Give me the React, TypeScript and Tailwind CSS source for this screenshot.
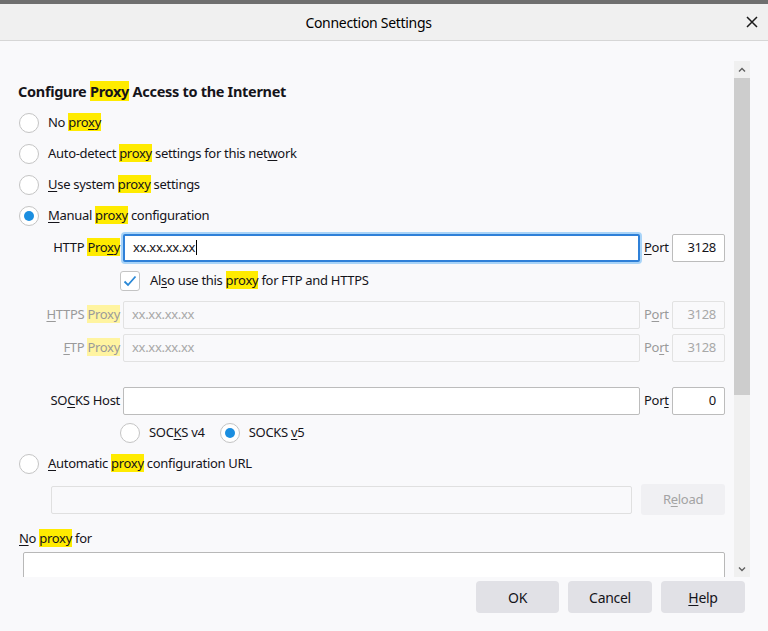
import type { ReactNode } from "react";

function Hl({ children, dim = false }: { children: ReactNode; dim?: boolean }) {
  return <span className={dim ? "bg-[#fff4a0]" : "bg-[#ffeb00]"}>{children}</span>;
}

function U({ children }: { children: ReactNode }) {
  return <span className="underline underline-offset-2">{children}</span>;
}

function Radio({ checked = false }: { checked?: boolean }) {
  return (
    <span className="flex h-[20px] w-[20px] flex-shrink-0 items-center justify-center rounded-full border border-[#c4c4c4] bg-white">
      {checked ? <span className="h-[10px] w-[10px] rounded-full bg-[#1b8ee0]" /> : null}
    </span>
  );
}

function RadioRow({ checked, children }: { checked?: boolean; children: ReactNode }) {
  return (
    <div className="flex h-[31px] items-center gap-[9px]">
      <Radio checked={checked} />
      <span>{children}</span>
    </div>
  );
}

interface ProxyRowProps {
  label: ReactNode;
  value: string;
  port: ReactNode;
  disabled?: boolean;
  focused?: boolean;
  portValue: string;
}

function ProxyRow({ label, value, port, disabled = false, focused = false, portValue }: ProxyRowProps) {
  const fieldBorder = disabled
    ? "border border-[#e2e2e2] bg-[#f9f9fb] text-[#a8a8a8]"
    : focused
      ? "border-2 border-[#2f80d8] bg-white shadow-[0_0_0_2px_#a9d4f8]"
      : "border border-[#bcbcbc] bg-white";
  return (
    <div className={`flex h-[33px] items-center ${disabled ? "text-[#9a9a9a]" : ""}`}>
      <div className="w-[102px] flex-shrink-0 pr-[1px] text-right">{label}</div>
      <div className={`ml-[2px] flex h-[28px] flex-1 items-center rounded-[2px] px-[8px] ${fieldBorder}`}>
        {value}
        {focused ? <span className="ml-[1px] inline-block h-[15px] w-[1px] bg-black" /> : null}
      </div>
      <div className="w-[32px] flex-shrink-0 pl-[4px]">{port}</div>
      <div
        className={`flex h-[28px] w-[53px] flex-shrink-0 items-center justify-end rounded-[2px] pr-[8px] ${
          disabled ? "border border-[#e2e2e2] text-[#a8a8a8]" : "border border-[#bcbcbc] bg-white"
        }`}
      >
        {portValue}
      </div>
    </div>
  );
}

function Scrollbar() {
  return (
    <div className="mt-[20px] flex w-[16px] flex-col">
      <div className="flex h-[17px] items-center justify-center bg-[#f0f0f0]">
        <svg width="8" height="6" viewBox="0 0 8 6" fill="none">
          <path d="M1 4.5 L4 1.5 L7 4.5" stroke="#606060" strokeWidth="1.4" />
        </svg>
      </div>
      <div className="h-[317px] bg-[#cdcdcd]" />
      <div className="flex-1 bg-[#f0f0f0]" />
      <div className="flex h-[17px] items-center justify-center bg-[#f0f0f0]">
        <svg width="8" height="6" viewBox="0 0 8 6" fill="none">
          <path d="M1 1.5 L4 4.5 L7 1.5" stroke="#606060" strokeWidth="1.4" />
        </svg>
      </div>
    </div>
  );
}

export default function App() {
  return (
    <div className="flex h-[631px] w-[768px] flex-col overflow-hidden bg-[#f9f9fb] font-['Noto_Sans',_sans-serif] text-[13px] tracking-[-0.3px] text-[#15141a]">
      <div className="h-[4px] bg-[#6f6f6f]" />
      <div className="relative flex h-[37px] items-center justify-center border-b border-[#d6d6d6] bg-[#f0f0f0] pr-[31px] text-[14px] text-black">
        Connection Settings
        <svg className="absolute right-[10px] top-[12px]" width="12" height="12" viewBox="0 0 12 12">
          <path d="M1 1 L11 11 M11 1 L1 11" stroke="#1a1a1a" strokeWidth="1.5" />
        </svg>
      </div>

      <div className="flex h-[536px] overflow-hidden">
        <div className="w-[734px] flex-shrink-0 pl-[19px] pr-[9px] pt-[36px]">
          <div className="-ml-[1px] flex h-[30px] items-center text-[14.5px] font-bold">
            <span>
              Configure <Hl>Proxy</Hl> Access to the Internet
            </span>
          </div>
          <RadioRow>
            No <Hl>pro<U>x</U>y</Hl>
          </RadioRow>
          <RadioRow>
            Auto-detect <Hl>proxy</Hl> settings for this net<U>w</U>ork
          </RadioRow>
          <RadioRow>
            <U>U</U>se system <Hl>proxy</Hl> settings
          </RadioRow>
          <RadioRow checked>
            <U>M</U>anual <Hl>proxy</Hl> configuration
          </RadioRow>

          <ProxyRow
            focused
            label={
              <>
                HTTP <Hl>Pro<U>x</U>y</Hl>
              </>
            }
            value="xx.xx.xx.xx"
            port={
              <>
                <U>P</U>ort
              </>
            }
            portValue="3128"
          />

          <div className="flex h-[34px] items-center pl-[101px]">
            <span className="flex h-[20px] w-[20px] items-center justify-center rounded-[3px] border border-[#c4c4c4] bg-white">
              <svg width="14" height="12" viewBox="0 0 14 12" fill="none">
                <path d="M1.5 6.5 L5 10 L12.5 1.5" stroke="#2a88d6" strokeWidth="1.8" />
              </svg>
            </span>
            <span className="ml-[10px]">
              Al<U>s</U>o use this <Hl>proxy</Hl> for FTP and HTTPS
            </span>
          </div>

          <ProxyRow
            disabled
            label={
              <>
                <U>H</U>TTPS <Hl dim>Proxy</Hl>
              </>
            }
            value="xx.xx.xx.xx"
            port={
              <>
                P<U>o</U>rt
              </>
            }
            portValue="3128"
          />
          <ProxyRow
            disabled
            label={
              <>
                <U>F</U>TP <Hl dim>Proxy</Hl>
              </>
            }
            value="xx.xx.xx.xx"
            port={
              <>
                Po<U>r</U>t
              </>
            }
            portValue="3128"
          />

          <div className="h-[20px]" />
          <ProxyRow
            label={
              <>
                SO<U>C</U>KS Host
              </>
            }
            value=""
            port={
              <>
                Por<U>t</U>
              </>
            }
            portValue="0"
          />

          <div className="flex h-[32px] items-center pl-[101px]">
            <Radio />
            <span className="ml-[9px]">
              SOC<U>K</U>S v4
            </span>
            <span className="ml-[15px]">
              <Radio checked />
            </span>
            <span className="ml-[9px]">
              SOCKS <U>v</U>5
            </span>
          </div>

          <div className="flex h-[30px] items-center gap-[9px]">
            <Radio />
            <span>
              <U>A</U>utomatic <Hl>proxy</Hl> configuration URL
            </span>
          </div>

          <div className="flex h-[41px] items-center pl-[32px]">
            <div className="h-[28px] flex-1 rounded-[2px] border border-[#e0e0e0]" />
            <div className="ml-[9px] flex h-[31px] w-[84px] items-center justify-center rounded-[3px] bg-[#f0f0f3] text-[#a3a3a3]">
              <span>
                R<U>e</U>load
              </span>
            </div>
          </div>

          <div className="flex h-[32px] items-center pt-[6px]">
            <span>
              <U>N</U>o <Hl>proxy</Hl> for
            </span>
          </div>
          <div className="ml-[4px] h-[60px] rounded-[2px] border border-[#b8b8b8] bg-white" />
        </div>
        <Scrollbar />
      </div>

      <div className="flex justify-end gap-[9px] pr-[23px] pt-[4px]">
        <div className="flex h-[32px] w-[83px] items-center justify-center rounded-[4px] bg-[#e1e1e6] text-[14px]">OK</div>
        <div className="flex h-[32px] w-[84px] items-center justify-center rounded-[4px] bg-[#e1e1e6] text-[14px]">Cancel</div>
        <div className="flex h-[32px] w-[84px] items-center justify-center rounded-[4px] bg-[#e1e1e6] text-[14px]">
          <span>
            <U>H</U>elp
          </span>
        </div>
      </div>
    </div>
  );
}
